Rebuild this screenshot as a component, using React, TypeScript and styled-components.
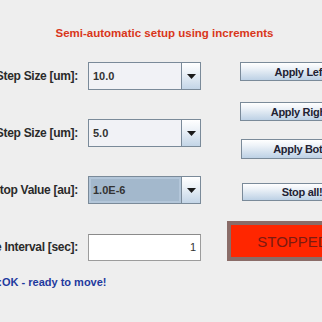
import React from "react";
import styled, { createGlobalStyle } from "styled-components";

const GlobalStyle = createGlobalStyle`
  html, body {
    margin: 0;
    padding: 0;
    background: #eeeeee;
  }
  body {
    font-family: "Liberation Sans", Arial, sans-serif;
  }
`;

const Panel = styled.div`
  width: 322px;
  height: 322px;
  overflow: hidden;
  background: #eeeeee;
  display: flex;
  flex-direction: column;
`;

const Title = styled.div`
  padding-top: 26px;
  padding-left: 7px;
  height: 14px;
  line-height: 14px;
  text-align: center;
  font-size: 11.5px;
  font-weight: bold;
  color: #d9361a;
  white-space: nowrap;
`;

const Body = styled.div`
  margin-top: 22px;
  display: flex;
  align-items: flex-start;
`;

const LeftColumn = styled.div`
  width: 201px;
  flex-shrink: 0;
  display: flex;
  flex-direction: column;
  gap: 29px;
`;

const Row = styled.div`
  display: flex;
  align-items: center;
  gap: 10px;
  height: 28px;
`;

const Label = styled.div`
  width: 78px;
  flex-shrink: 0;
  display: flex;
  justify-content: flex-end;
  overflow: hidden;
  white-space: nowrap;
  font-size: 12px;
  letter-spacing: -0.3px;
  font-weight: bold;
  color: #2a2a2a;
`;

const Combo = styled.div<{ $selected?: boolean }>`
  width: 113px;
  height: 28px;
  box-sizing: border-box;
  border: 1px solid #7a8a99;
  display: flex;
  background: ${(p) => (p.$selected ? "#a3b8cc" : "#f1f2f6")};
`;

const ComboValue = styled.div<{ $selected?: boolean }>`
  flex: 1;
  display: flex;
  align-items: center;
  padding-left: 4px;
  font-size: 11px;
  font-weight: bold;
  color: #333333;
  ${(p) => p.$selected && "box-shadow: inset 0 0 0 2px #b3c6d9;"}
`;

const ComboArrow = styled.div`
  width: 18px;
  border-left: 1px solid #7a8a99;
  display: flex;
  align-items: center;
  justify-content: center;
  background: linear-gradient(to bottom, #ffffff 0%, #eef3f8 35%, #c3d5e7 100%);
`;

const TextField = styled.div`
  width: 113px;
  height: 27px;
  box-sizing: border-box;
  border: 1px solid #9c9c9c;
  border-top-color: #8a8a8a;
  background: #ffffff;
  display: flex;
  align-items: center;
  justify-content: flex-end;
  padding-right: 4px;
  font-size: 11px;
  color: #333333;
`;

const RightColumn = styled.div`
  margin-left: 26px;
  display: flex;
  flex-direction: column;
  flex-shrink: 0;
`;

const Button = styled.div<{ $top: number; $left: number; $height?: number }>`
  margin-top: ${(p) => p.$top}px;
  margin-left: ${(p) => p.$left}px;
  width: 120px;
  height: ${(p) => p.$height ?? 19}px;
  box-sizing: border-box;
  border: 1px solid #7a8a99;
  background: linear-gradient(to bottom, #ffffff 0%, #eef3f8 30%, #bdd1e5 100%);
  display: flex;
  align-items: center;
  justify-content: center;
  font-size: 11px;
  letter-spacing: -0.3px;
  font-weight: bold;
  color: #222233;
  white-space: nowrap;
`;

const StopBox = styled.div`
  margin-top: 20px;
  width: 132px;
  height: 40px;
  box-sizing: border-box;
  border: 4px solid #8a6c68;
  background: #ff2600;
  display: flex;
  align-items: center;
  justify-content: center;
  font-size: 15px;
  color: #7c1a10;
  white-space: nowrap;
`;

const Status = styled.div`
  margin-top: 14px;
  display: flex;
  height: 14px;
  line-height: 14px;
  font-size: 11px;
  font-weight: bold;
  color: #1e3a9e;
  white-space: nowrap;
`;

const StatusClip = styled.span`
  width: 2px;
  display: flex;
  justify-content: flex-end;
  overflow: hidden;
`;

const Arrow = () => (
  <svg width="9" height="5" viewBox="0 0 9 5">
    <polygon points="0,0 9,0 4.5,5" fill="#1a1a1a" />
  </svg>
);

const ComboBox: React.FC<{ value: string; selected?: boolean }> = ({ value, selected }) => (
  <Combo $selected={selected}>
    <ComboValue $selected={selected}>{value}</ComboValue>
    <ComboArrow>
      <Arrow />
    </ComboArrow>
  </Combo>
);

export default function App() {
  return (
    <>
      <GlobalStyle />
      <Panel>
        <Title>Semi-automatic setup using increments</Title>
        <Body>
          <LeftColumn>
            <Row>
              <Label>Left Step Size [um]:</Label>
              <ComboBox value="10.0" />
            </Row>
            <Row>
              <Label>Right Step Size [um]:</Label>
              <ComboBox value="5.0" />
            </Row>
            <Row>
              <Label>Stop Value [au]:</Label>
              <ComboBox value="1.0E-6" selected />
            </Row>
            <Row>
              <Label>Update Interval [sec]:</Label>
              <TextField>1</TextField>
            </Row>
          </LeftColumn>
          <RightColumn>
            <Button $top={0} $left={13}>Apply Left</Button>
            <Button $top={21} $left={13}>Apply Right</Button>
            <Button $top={18} $left={14} $height={20}>Apply Both</Button>
            <Button $top={24} $left={15} $height={18}>Stop all!</Button>
            <StopBox>STOPPED</StopBox>
          </RightColumn>
        </Body>
        <Status>
          <StatusClip>
            <span>Status:</span>
          </StatusClip>
          OK - ready to move!
        </Status>
      </Panel>
    </>
  );
}
